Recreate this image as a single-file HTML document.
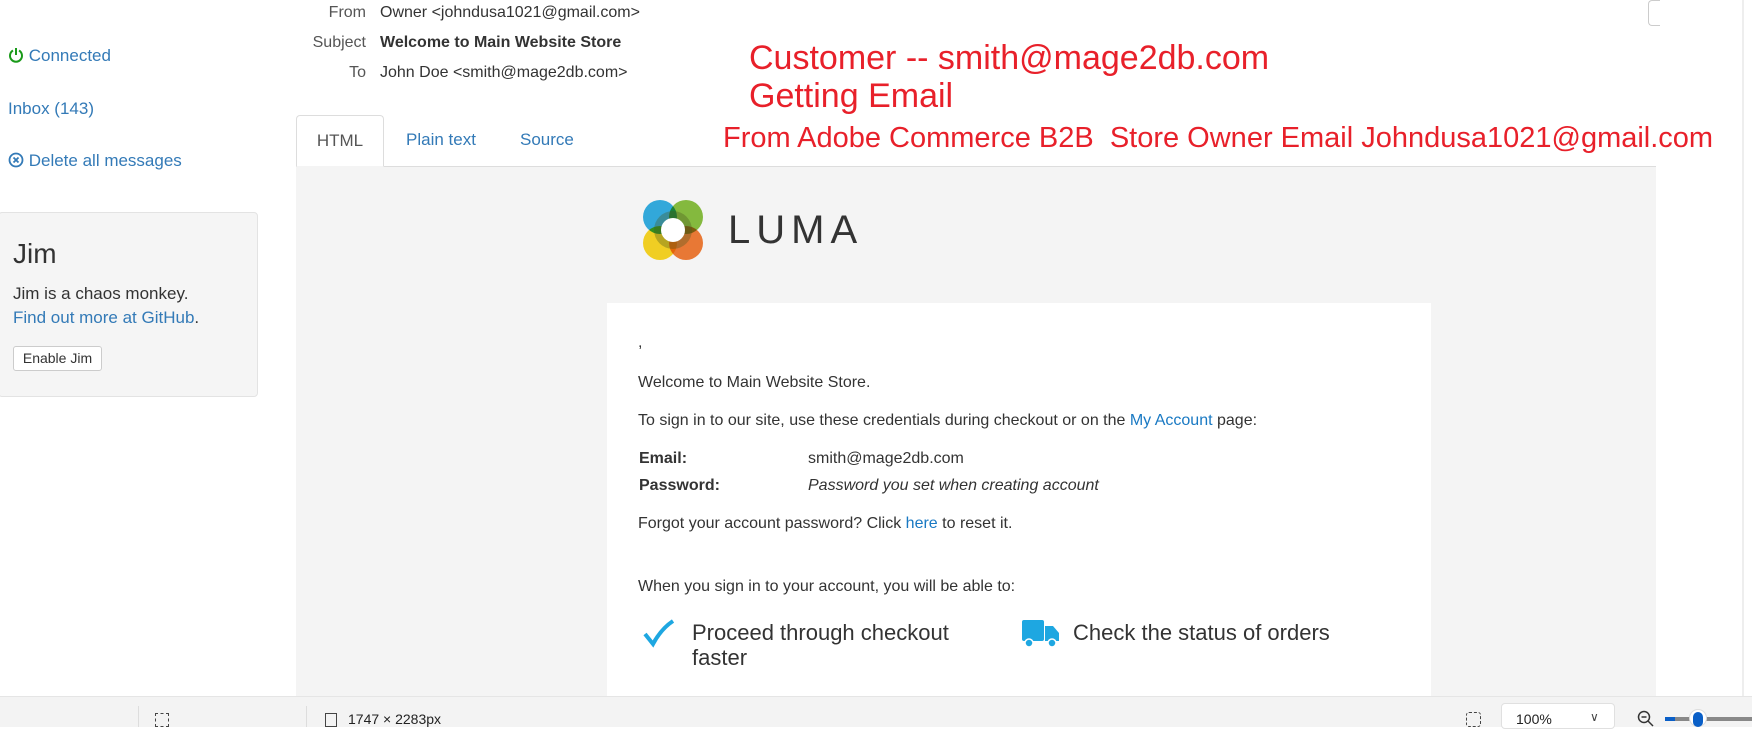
<!DOCTYPE html>
<html><head><meta charset="utf-8"><style>
*{margin:0;padding:0;box-sizing:border-box}
body{width:1752px;height:727px;overflow:hidden;background:#fff;font-family:"Liberation Sans",Arial,sans-serif;position:relative;color:#333}
.a{position:absolute;white-space:nowrap}
.blue{color:#337ab7}
.hl{font-size:16px;color:#555;text-align:right;width:120px}
.hv{font-size:16px;color:#333}
.red{color:#e8202a}
.b{font-size:16px;color:#333}
.lk{color:#1979c3}
</style></head><body>
<div class="a blue" style="left:8px;top:46px;font-size:17px"><svg width="16" height="16" viewBox="0 0 16 16" style="vertical-align:-2px"><path d="M5 3.5A6 6 0 1 0 11 3.5" fill="none" stroke="#1a9a1a" stroke-width="2"/><line x1="8" y1="1" x2="8" y2="8" stroke="#1a9a1a" stroke-width="2"/></svg> Connected</div>
<div class="a blue" style="left:8px;top:99px;font-size:17px">Inbox (143)</div>
<div class="a blue" style="left:8px;top:151px;font-size:17px"><svg width="16" height="16" viewBox="0 0 16 16" style="vertical-align:-2px"><circle cx="8" cy="8" r="6.5" fill="none" stroke="#337ab7" stroke-width="1.8"/><path d="M5.5 5.5L10.5 10.5M10.5 5.5L5.5 10.5" stroke="#337ab7" stroke-width="1.8"/></svg> Delete all messages</div>
<div class="a" style="left:-2px;top:212px;width:260px;height:185px;background:#f5f5f5;border:1px solid #e3e3e3;border-radius:4px"></div>
<div class="a" style="left:13px;top:238px;font-size:28px;color:#333">Jim</div>
<div class="a" style="left:13px;top:284px;font-size:17px;color:#333">Jim is a chaos monkey.</div>
<div class="a" style="left:13px;top:308px;font-size:17px"><span class="blue">Find out more at GitHub</span>.</div>
<div class="a" style="left:13px;top:346px;width:89px;height:25px;border:1px solid #ccc;border-radius:3px;background:#fff;font-size:14px;line-height:23px;text-align:center;color:#333">Enable Jim</div>
<div class="a hl" style="left:246px;top:4px">From</div><div class="a hv" style="left:380px;top:4px">Owner &lt;johndusa1021@gmail.com&gt;</div>
<div class="a hl" style="left:246px;top:34px">Subject</div><div class="a hv" style="left:380px;top:34px;font-weight:bold">Welcome to Main Website Store</div>
<div class="a hl" style="left:246px;top:64px">To</div><div class="a hv" style="left:380px;top:64px">John Doe &lt;smith@mage2db.com&gt;</div>
<div class="a" style="left:1648px;top:0;width:12px;height:26px;border:1px solid #ccc;border-right:none;border-radius:4px 0 0 4px"></div>
<div class="a" style="left:1742px;top:0;width:2px;height:696px;background:#eee"></div>
<div class="a red" style="left:749px;top:39px;font-size:34px">Customer -- smith@mage2db.com</div>
<div class="a red" style="left:749px;top:77px;font-size:34px">Getting Email</div>
<div class="a red" style="left:723px;top:122px;font-size:29px">From Adobe Commerce B2B&nbsp; Store Owner Email Johndusa1021@gmail.com</div>
<div class="a" style="left:296px;top:166px;width:1360px;height:1px;background:#ddd"></div>
<div class="a" style="left:296px;top:115px;width:88px;height:52px;border:1px solid #ddd;border-bottom:1px solid #f4f4f4;border-radius:4px 4px 0 0;background:#fff;font-size:17px;color:#555;text-align:center;line-height:50px">HTML</div>
<div class="a blue" style="left:406px;top:130px;font-size:17px">Plain text</div>
<div class="a blue" style="left:520px;top:130px;font-size:17px">Source</div>
<div class="a" style="left:296px;top:167px;width:1360px;height:529px;background:#f4f4f4"></div>
<svg class="a" style="left:638px;top:195px" width="72" height="72" viewBox="638 195 72 72">
<circle cx="660" cy="217" r="17" fill="#1ea7e1" style="mix-blend-mode:multiply" opacity="0.9"/>
<circle cx="686" cy="217" r="17" fill="#7dbb2c" style="mix-blend-mode:multiply" opacity="0.9"/>
<circle cx="660" cy="243" r="17" fill="#fbd40c" style="mix-blend-mode:multiply" opacity="0.9"/>
<circle cx="686" cy="243" r="17" fill="#f26f21" style="mix-blend-mode:multiply" opacity="0.9"/>
<circle cx="673" cy="230" r="19" fill="#4a5a20" opacity="0.35"/>
<circle cx="673" cy="230" r="12" fill="#fff"/>
</svg>
<div class="a" style="left:728px;top:208px;font-size:40px;letter-spacing:6px;color:#333">LUMA</div>
<div class="a" style="left:607px;top:303px;width:824px;height:393px;background:#fff"></div>
<div class="a b" style="left:638px;top:334px">,</div>
<div class="a b" style="left:638px;top:374px">Welcome to Main Website Store.</div>
<div class="a b" style="left:638px;top:412px">To sign in to our site, use these credentials during checkout or on the <span class="lk">My Account</span> page:</div>
<div class="a b" style="left:639px;top:450px;font-weight:bold">Email:</div>
<div class="a b" style="left:808px;top:450px">smith@mage2db.com</div>
<div class="a b" style="left:639px;top:477px;font-weight:bold">Password:</div>
<div class="a b" style="left:808px;top:477px;font-style:italic">Password you set when creating account</div>
<div class="a b" style="left:638px;top:515px">Forgot your account password? Click <span class="lk">here</span> to reset it.</div>
<div class="a b" style="left:638px;top:578px">When you sign in to your account, you will be able to:</div>
<svg class="a" style="left:643px;top:619px" width="32" height="30" viewBox="0 0 32 30"><path d="M2 15L10 25Q18 10 30 2" fill="none" stroke="#1ea7e1" stroke-width="4"/></svg>
<div class="a" style="left:692px;top:620px;font-size:22px;color:#333;line-height:25px">Proceed through checkout<br>faster</div>
<svg class="a" style="left:1022px;top:620px" width="38" height="28" viewBox="0 0 38 28"><rect x="0" y="0" width="22" height="21" rx="2" fill="#1ea7e1"/><path d="M23 6h8l6 7v8h-14z" fill="#1ea7e1"/><circle cx="7" cy="23" r="4" fill="#1ea7e1" stroke="#fff" stroke-width="1.5"/><circle cx="30" cy="23" r="4" fill="#1ea7e1" stroke="#fff" stroke-width="1.5"/></svg>
<div class="a" style="left:1073px;top:620px;font-size:22px;color:#333">Check the status of orders</div>
<div class="a" style="left:0;top:696px;width:1752px;height:31px;background:#f3f3f3;border-top:1px solid #e5e5e5"></div>
<div class="a" style="left:138px;top:706px;width:1px;height:21px;background:#ddd"></div>
<div class="a" style="left:306px;top:706px;width:1px;height:21px;background:#ddd"></div>
<div class="a" style="left:155px;top:713px;width:14px;height:14px;border:1.5px dashed #444"></div>
<div class="a" style="left:325px;top:713px;width:12px;height:14px;border:1.5px solid #444"></div>
<div class="a" style="left:348px;top:711px;font-size:14px;color:#222">1747 × 2283px</div>
<div class="a" style="left:1466px;top:712px;width:15px;height:15px;border:1.5px dashed #444;border-radius:3px"></div>
<div class="a" style="left:1501px;top:703px;width:114px;height:26px;background:#fff;border:1px solid #e0e0e0;border-radius:4px"></div>
<div class="a" style="left:1516px;top:711px;font-size:14px;color:#222">100%</div>
<div class="a" style="left:1590px;top:710px;font-size:12px;color:#444">∨</div>
<svg class="a" style="left:1637px;top:710px" width="18" height="18" viewBox="0 0 18 18"><circle cx="7" cy="7" r="5.5" fill="none" stroke="#333" stroke-width="1.5"/><path d="M11 11l5 5M4.5 7h5" stroke="#333" stroke-width="1.5"/></svg>
<div class="a" style="left:1665px;top:717px;width:87px;height:4px;background:#888"></div>
<div class="a" style="left:1665px;top:717px;width:10px;height:4px;background:#0a5fc7"></div>
<div class="a" style="left:1689px;top:709px;width:18px;height:18px;border-radius:50%;background:#fff;border:1px solid #ddd"></div>
<div class="a" style="left:1693px;top:712px;width:10px;height:15px;border-radius:5px;background:#0a5fc7"></div>
</body></html>
